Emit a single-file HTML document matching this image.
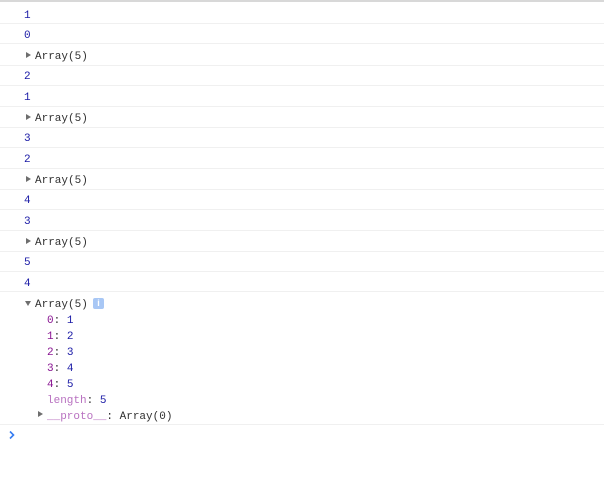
<!DOCTYPE html>
<html><head><style>
body{margin:0;width:604px;height:480px;background:#fff;font-family:"Liberation Mono",monospace;font-size:11px;position:relative;overflow:hidden}
.top{position:absolute;left:0;top:0;width:604px;height:2px;background:#d8d8d8}
.r{position:absolute;left:0;width:604px;border-bottom:1px solid #f0f0f0;box-sizing:border-box}
.t{position:absolute;white-space:pre;line-height:13px;color:#303030;margin-top:2px}
.n{color:#1a1aa6}
.k{color:#881391}
.kl{color:#b871c0}
.tri{position:absolute;width:0;height:0;margin-top:1px}
.tr{border-top:3.5px solid transparent;border-bottom:3.5px solid transparent;border-left:5px solid #6e6e6e}
.td{border-left:3.5px solid transparent;border-right:3.5px solid transparent;border-top:5px solid #6e6e6e}
.info{position:absolute;left:93px;top:298px;width:11px;height:11px;background:#a8c7f5;border-radius:2px;color:#fff;font:bold 9px "Liberation Sans",sans-serif;text-align:center;line-height:11px}
</style></head><body>
<div class="top"></div>
<div class="r" style="top:2px;height:22px"></div><div class="t n" style="left:24px;top:8px">1</div>
<div class="r" style="top:24px;height:20px"></div><div class="t n" style="left:24px;top:28px">0</div>
<div class="r" style="top:44px;height:22px"></div><div class="tri tr" style="left:26px;top:51px"></div><div class="t" style="left:35px;top:49px">Array(5)</div>
<div class="r" style="top:66px;height:20px"></div><div class="t n" style="left:24px;top:69px">2</div>
<div class="r" style="top:86px;height:21px"></div><div class="t n" style="left:24px;top:90px">1</div>
<div class="r" style="top:107px;height:21px"></div><div class="tri tr" style="left:26px;top:113px"></div><div class="t" style="left:35px;top:111px">Array(5)</div>
<div class="r" style="top:128px;height:20px"></div><div class="t n" style="left:24px;top:131px">3</div>
<div class="r" style="top:148px;height:21px"></div><div class="t n" style="left:24px;top:152px">2</div>
<div class="r" style="top:169px;height:21px"></div><div class="tri tr" style="left:26px;top:175px"></div><div class="t" style="left:35px;top:173px">Array(5)</div>
<div class="r" style="top:190px;height:20px"></div><div class="t n" style="left:24px;top:193px">4</div>
<div class="r" style="top:210px;height:21px"></div><div class="t n" style="left:24px;top:214px">3</div>
<div class="r" style="top:231px;height:21px"></div><div class="tri tr" style="left:26px;top:237px"></div><div class="t" style="left:35px;top:235px">Array(5)</div>
<div class="r" style="top:252px;height:20px"></div><div class="t n" style="left:24px;top:255px">5</div>
<div class="r" style="top:272px;height:20px"></div><div class="t n" style="left:24px;top:276px">4</div>
<div class="r" style="top:292px;height:133px"></div>
<div class="tri td" style="left:25px;top:300px"></div><div class="t" style="left:35px;top:297px">Array(5)</div><div class="info">i</div>
<div class="t" style="left:47px;top:313px"><span class="k">0</span>: <span class="n">1</span></div>
<div class="t" style="left:47px;top:329px"><span class="k">1</span>: <span class="n">2</span></div>
<div class="t" style="left:47px;top:345px"><span class="k">2</span>: <span class="n">3</span></div>
<div class="t" style="left:47px;top:361px"><span class="k">3</span>: <span class="n">4</span></div>
<div class="t" style="left:47px;top:377px"><span class="k">4</span>: <span class="n">5</span></div>
<div class="t" style="left:47px;top:393px"><span class="kl">length</span>: <span class="n">5</span></div>
<div class="tri tr" style="left:38px;top:410px"></div><div class="t" style="left:47px;top:409px"><span class="kl">__proto__</span>: Array(0)</div>
<svg style="position:absolute;left:8px;top:430px" width="8" height="10"><path d="M2 1.5L5.5 5L2 8.5" stroke="#367cf1" stroke-width="1.6" fill="none"/></svg>
</body></html>
